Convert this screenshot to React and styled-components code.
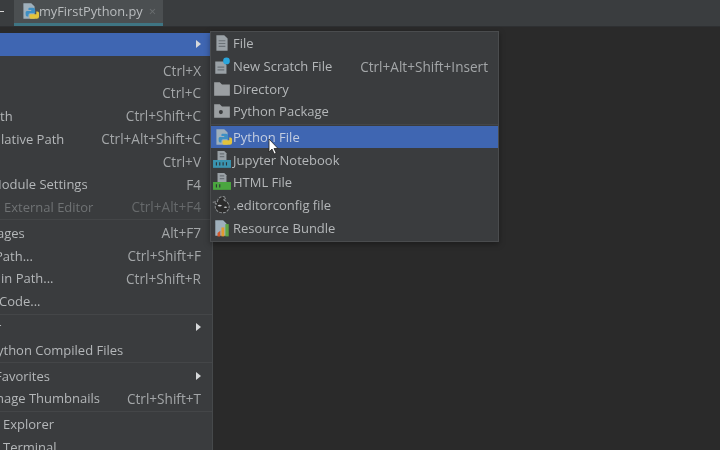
import React from 'react';
import styled, { createGlobalStyle } from 'styled-components';

const Global = createGlobalStyle`
  html, body { margin: 0; padding: 0; background: #2a2a2a; overflow: hidden; }
  #root { width: 720px; height: 450px; overflow: hidden; }
`;

const Screen = styled.div`
  width: 720px;
  height: 450px;
  display: flex;
  flex-direction: column;
  overflow: hidden;
  background: #2a2a2a;
  font-family: "Open Sans", "Noto Sans", sans-serif;
  font-size: 13px;
  color: #b4b7b9;
  filter: blur(0.55px);
`;

const TabBar = styled.div`
  height: 27px;
  flex: none;
  display: flex;
  background: #3a3d3f;
  border-bottom: 1px solid #2e3032;
  box-sizing: border-box;
`;
const WindowDash = styled.div`
  width: 4px;
  height: 1px;
  margin: 11px 10px 0 0;
  background: #d5d5d5;
`;
const Tab = styled.div`
  width: 149px;
  box-sizing: border-box;
  display: flex;
  align-items: center;
  gap: 0;
  padding: 0 0 2px 7px;
  background: #4b4f51;
  border-bottom: 3px solid #3f7583;
  color: #b9bcbe;
  font-size: 12.8px;
`;
const TabClose = styled.span`
  margin-left: 6px;
  color: #6a6e70;
  font-size: 13px;
`;

const Body = styled.div`
  position: relative;
  flex: 1;
  padding-top: 6px;
  min-height: 0;
`;

const Menu = styled.div`
  width: 213px;
  height: 420px;
  box-sizing: border-box;
  background: #3a3c3e;
  border-right: 1px solid #46494b;
  overflow: hidden;
`;

const Row = styled.div`
  height: 22.8px;
  display: flex;
  align-items: center;
  justify-content: space-between;
  padding-right: 11px;
  box-sizing: border-box;
  white-space: nowrap;
  background: ${p => (p.$active ? '#3f66b2' : 'transparent')};
  color: ${p => (p.$dim ? '#6f7274' : 'inherit')};
`;
const Label = styled.span`
  margin-left: ${p => p.$x || 0}px;
`;
const Shortcut = styled.span`
  color: ${p => (p.$dim ? '#66696b' : '#a3a6a8')};
  font-size: 13.6px;
`;
const Arrow = styled.span`
  width: 0;
  height: 0;
  border-left: 5px solid #d6d8da;
  border-top: 4px solid transparent;
  border-bottom: 4px solid transparent;
`;
const Divider = styled.div`
  height: 1px;
  margin: 1px 0;
  background: ${p => (p.$blank ? 'transparent' : '#444648')};
`;

const Submenu = styled.div`
  position: absolute;
  left: 210px;
  top: 4px;
  width: 289px;
  height: 211px;
  box-sizing: border-box;
  background: #3a3c3e;
  border: 1px solid #4a4c4e;
  box-shadow: 0 2px 6px rgba(0, 0, 0, 0.35);
`;
const SubRow = styled.div`
  height: 22.7px;
  display: flex;
  align-items: center;
  box-sizing: border-box;
  padding: 0 10px 0 3px;
  gap: 1px;
  white-space: nowrap;
  background: ${p => (p.$active ? '#3f66b2' : 'transparent')};
  color: ${p => (p.$active ? '#c3cde0' : 'inherit')};
`;
const SubLabel = styled.span`
  flex: 1;
`;
const SubDivider = styled.div`
  height: 1px;
  margin: 1px 0;
  background: #444648;
`;
const Cursor = styled.svg`
  position: absolute;
  left: 268px;
  top: 111px;
`;
const IconBox = styled.svg`
  width: 18px;
  height: 18px;
  flex: none;
  overflow: visible;
  transform: translateX(-1px) scale(1.12);
`;

const Page = ({ fill = '#9aa1a6' }) => (
  <path d="M4 2h7l3 3v11H4z" fill={fill} />
);
const Lines = () => (
  <path d="M6 7h6M6 9.500h6M6 12h6" stroke="#6b7277" strokeWidth="1" />
);
const Snake = () => (
  <>
    <path d="M9 6h3.500a2 2 0 0 1 2 2v3H10a1.500 1.500 0 0 0-1.500 1.500V14H7a2 2 0 0 1-1-2v-2a1.500 1.500 0 0 1 1.500-1H11V8H8.500V7A1 1 0 0 1 9 6z" fill="#3d8fc4" />
    <path d="M15.500 9.500h1a1.500 1.500 0 0 1 1.500 1.500v3a2 2 0 0 1-2 2H11a1.500 1.500 0 0 1-1.500-1.500V13a1 1 0 0 1 1-1h5z" fill="#e3c33a" />
  </>
);

const FileIcon = () => <IconBox viewBox="0 0 18 18"><Page /><Lines /></IconBox>;
const ScratchIcon = () => (
  <IconBox viewBox="0 0 18 18">
    <path d="M3 5h7l3 3v8H3z" fill="#9aa1a6" />
    <path d="M5 10h6M5 12.500h6" stroke="#6b7277" />
    <circle cx="13" cy="4.500" r="3" fill="#2aa6dc" />
  </IconBox>
);
const FolderIcon = ({ dot }) => (
  <IconBox viewBox="0 0 18 18">
    <path d="M2 3h5l2 2h7v10H2z" fill="#9b9fa2" />
    {dot && <circle cx="8" cy="10" r="1.800" fill="#3a3c3e" />}
  </IconBox>
);
const PythonIcon = () => (
  <IconBox viewBox="0 0 18 18"><Page fill="#9fb0bc" /><Snake /></IconBox>
);
const BandIcon = ({ color, mark }) => (
  <IconBox viewBox="0 0 18 18">
    <path d="M5 1h6l2 2v6H5z" fill="#9aa1a6" />
    <path d="M7 3.500h4M7 6h4" stroke="#6b7277" />
    <rect x="1" y="9" width="16" height="7" fill={color} />
    <path d={mark} stroke="#2f3335" strokeWidth="1" fill="none" />
  </IconBox>
);
const EditorConfigIcon = () => (
  <IconBox viewBox="0 0 18 18">
    <path d="M5 6c0-2.500 2-4.500 4.500-4.500 1.500 0 2.500.6 3 1.600L10 4.500 13.500 6 15 8.500c1 2.500 0 5.500-3 7-2.500 1-5.500.5-7.500-1.500C2.500 12 2.500 9.500 4 8L1.500 6.500z" fill="#2c2c2c" stroke="#8f9294" strokeWidth="0.9" strokeDasharray="2.500 1" />
    <path d="M5 9.500c1-1 3-1 4 0-1 1-3 1-4 0zM10.500 11c.8-.8 2.500-.8 3.200 0-.7.9-2.400.9-3.200 0z" fill="#c5c7c9" />
  </IconBox>
);
const BundleIcon = () => (
  <IconBox viewBox="0 0 18 18">
    <path d="M3 2h7l3 3v11H3z" fill="#9fb0bc" />
    <path d="M5 16.500v-3l2.500-2v5z" fill="#d0572b" />
    <rect x="8.500" y="8.500" width="2.600" height="8" fill="#e39a2e" />
    <rect x="12" y="5.500" width="3" height="11" fill="#5ea644" />
  </IconBox>
);

const mainRows = [
  { active: true, arrow: true },
  'gap',
  { sc: 'Ctrl+X' },
  { sc: 'Ctrl+C' },
  { text: 'th', sc: 'Ctrl+Shift+C' },
  { text: 'lative Path', x: 1, sc: 'Ctrl+Alt+Shift+C' },
  { sc: 'Ctrl+V' },
  { text: 'Module Settings', x: -10, sc: 'F4' },
  { text: 'External Editor', x: 4, sc: 'Ctrl+Alt+F4', dim: true },
  'sep',
  { text: 'ages', x: -3, sc: 'Alt+F7' },
  { text: 'Path...', x: -5, sc: 'Ctrl+Shift+F' },
  { text: 'in Path...', x: 1, sc: 'Ctrl+Shift+R' },
  { text: 'Code...', x: -1 },
  'sep',
  { text: 'r', x: -4, arrow: true },
  { text: 'ython Compiled Files', x: -3 },
  'sep',
  { text: 'Favorites', x: -5, arrow: true },
  { text: 'nage Thumbnails', x: -4, sc: 'Ctrl+Shift+T' },
  'sep',
  { text: 'Explorer', x: 3 },
  { text: 'Terminal', x: 3 },
];

const subTop = [
  { icon: <FileIcon />, text: 'File' },
  { icon: <ScratchIcon />, text: 'New Scratch File', sc: 'Ctrl+Alt+Shift+Insert' },
  { icon: <FolderIcon />, text: 'Directory' },
  { icon: <FolderIcon dot />, text: 'Python Package' },
];
const subBottom = [
  { icon: <PythonIcon />, text: 'Python File', active: true },
  { icon: <BandIcon color="#3a94b0" mark="M4 11v3M7 11v3M10 11v3M13 11v3" />, text: 'Jupyter Notebook' },
  { icon: <BandIcon color="#4aa63f" mark="M4 11v3M7 11v3" />, text: 'HTML File' },
  { icon: <EditorConfigIcon />, text: '.editorconfig file' },
  { icon: <BundleIcon />, text: 'Resource Bundle' },
];

const SubItem = ({ item }) => (
  <SubRow $active={item.active}>
    {item.icon}
    <SubLabel>{item.text}</SubLabel>
    {item.sc && <Shortcut>{item.sc}</Shortcut>}
  </SubRow>
);

export default function App() {
  return (
    <>
      <Global />
      <Screen>
        <TabBar>
          <WindowDash />
          <Tab>
            <IconBox viewBox="0 0 18 18"><Page fill="#9fb0bc" /><Snake /></IconBox>
            myFirstPython.py
            <TabClose>×</TabClose>
          </Tab>
        </TabBar>
        <Body>
          <Menu>
            {mainRows.map((r, i) =>
              typeof r === 'string' ? (
                <Divider key={i} $blank={r === 'gap'} />
              ) : (
                <Row key={i} $active={r.active} $dim={r.dim}>
                  <Label $x={r.x}>{r.text}</Label>
                  {r.sc && <Shortcut $dim={r.dim}>{r.sc}</Shortcut>}
                  {r.arrow && <Arrow />}
                </Row>
              )
            )}
          </Menu>
          <Submenu>
            {subTop.map(it => <SubItem key={it.text} item={it} />)}
            <SubDivider />
            {subBottom.map(it => <SubItem key={it.text} item={it} />)}
          </Submenu>
          <Cursor width="12" height="18" viewBox="0 0 12 18">
            <path d="M1 1v13l3-3 2.200 5 2-1-2.200-4.500H10z" fill="#fff" stroke="#222" strokeWidth="0.8" />
          </Cursor>
        </Body>
      </Screen>
    </>
  );
}
